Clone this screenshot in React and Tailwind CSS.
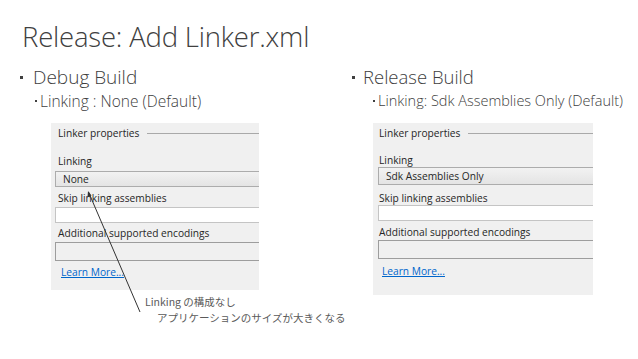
import React from "react";

const ui = "font-['Segoe_UI','Open_Sans','Noto_Sans',sans-serif]";
const panelFont = "font-['Segoe_UI','Open_Sans',sans-serif]";

function Dot({ size = 3 }) {
  return (
    <span className="flex items-center justify-center">
      <span className="bg-[#404040]" style={{ width: size, height: size }} />
    </span>
  );
}

function Panel({ value, w, h, gaps }) {
  // gaps: [linkingTop, comboTop, comboH, skipTop, textTop, encLabelTop, encTop, learnTop, labelX, boxX]
  const [g1, g2, comboH, g3, g4, g5, g6, g7, lx, bx] = gaps;
  return (
    <div className={`bg-[#f0f0f0] overflow-hidden flex flex-col text-[10.2px] leading-[14px] font-normal text-[#262626] ${panelFont}`} style={{ width: w, height: h }}>
      <div className="flex items-center pt-[3px]" style={{ paddingLeft: lx }}>
        <span className="whitespace-nowrap">Linker properties</span>
        <span className="flex-1 h-px bg-[#a9a9a9] ml-[8px]" />
      </div>
      <div style={{ marginTop: g1, paddingLeft: lx }}>Linking</div>
      <div
        className="border border-[#acacac] border-r-0 bg-gradient-to-b from-[#f2f2f2] to-[#e4e4e4] flex items-center pl-[7px]"
        style={{ marginTop: g2, marginLeft: bx, height: comboH }}
      >
        {value}
      </div>
      <div style={{ marginTop: g3, paddingLeft: lx }}>Skip linking assemblies</div>
      <div className="h-[16px] bg-white border border-[#c4c4c4] border-r-0" style={{ marginTop: g4, marginLeft: bx }} />
      <div style={{ marginTop: g5, paddingLeft: lx }}>Additional supported encodings</div>
      <div className="h-[19px] border border-[#9d9d9d] border-r-0" style={{ marginTop: g6, marginLeft: bx }} />
      <div style={{ marginTop: g7, paddingLeft: lx + 3 }}>
        <span className="text-[#0066cc] underline underline-offset-1">Learn More...</span>
      </div>
    </div>
  );
}

export default function App() {
  return (
    <div className={`relative w-[638px] h-[359px] bg-white overflow-hidden text-[#404040] ${ui}`}>
      <h1 className="pl-[22px] pt-[19px] text-[27.5px] leading-[36px] font-light tracking-[-0.2px]">
        Release: Add Linker.xml
      </h1>

      <div className="flex mt-[10px] font-light">
        {/* DEBUG */}
        <div className="w-[332px] pl-[20px]">
          <div className="flex h-[24px] text-[19px] leading-[24px]">
            <span className="w-[13px] flex"><Dot size={3} /></span>
            <span>Debug Build</span>
          </div>
          <div className="flex h-[20px] mt-[2px] pl-[15px] text-[15.5px] leading-[20px]">
            <span className="w-[5px] flex"><Dot size={2} /></span>
            <span>Linking : None (Default)</span>
          </div>
          <div className="mt-[12px] ml-[31px]">
            <Panel value="None" w={208} h={167} gaps={[14, 3, 16, 4, 2, 3, 2, 4, 7, 4]} />
          </div>
          <div className="mt-[4px] ml-[125px] text-[10.5px] leading-[16px] text-[#5a5a5a] font-normal font-['Noto_Sans_CJK_JP',sans-serif] whitespace-nowrap">
            <div>Linking の構成なし</div>
            <div className="pl-[12px]">アプリケーションのサイズが大きくなる</div>
          </div>
        </div>

        {/* RELEASE */}
        <div className="pl-[20px]">
          <div className="flex h-[24px] text-[18.5px] leading-[24px]">
            <span className="w-[11px] flex"><Dot size={3} /></span>
            <span>Release Build</span>
          </div>
          <div className="flex h-[20px] mt-[2px] pl-[21px] text-[14.5px] leading-[20px]">
            <span className="w-[5px] flex"><Dot size={2} /></span>
            <span>Linking: Sdk Assemblies Only (Default)</span>
          </div>
          <div className="mt-[12px] ml-[21px]">
            <Panel value="Sdk Assemblies Only" w={220} h={172} gaps={[13, 0, 18, 6, 0, 4, 1, 5, 6, 5]} />
          </div>
        </div>
      </div>

      {/* annotation arrow */}
      <svg className="absolute left-0 top-0 pointer-events-none" width="638" height="359">
        <line x1="88.5" y1="192" x2="140" y2="312" stroke="#333" strokeWidth="1" />
        <polygon points="88,191 87.5,197 91.5,195.5" fill="#333" />
      </svg>
    </div>
  );
}
